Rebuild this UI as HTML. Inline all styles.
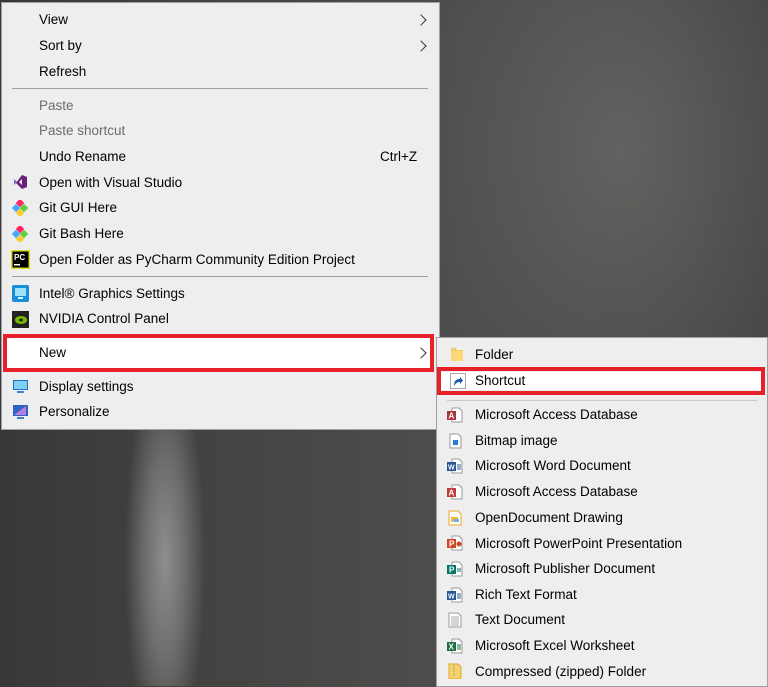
<!DOCTYPE html>
<html><head><meta charset="utf-8"><style>
*{margin:0;padding:0;box-sizing:border-box}
body{width:768px;height:686px;overflow:hidden;position:relative;font-family:"Liberation Sans",sans-serif;font-size:13.5px;color:#000;
background:
radial-gradient(ellipse 40px 200px at 165px 560px,#8e8e8c 0%,#6d6d6b 50%,transparent 100%),
radial-gradient(ellipse 200px 300px at 620px 150px,#626260,transparent),
linear-gradient(90deg,#383838 0%,#444443 30%,#4e4e4e 60%,#464645 100%);}
.m{position:absolute;background:#eeeeee;border:1px solid #a0a0a0}
.t{position:absolute;white-space:nowrap;line-height:16px}
.g{color:#6d6d6d}
.sep{position:absolute;height:1px;background:#a0a0a0}
.ic{position:absolute;width:16px;height:16px}
.red{position:absolute;border:4px solid #e8202a}
.ar{position:absolute;width:8px;height:8px;border-right:1.5px solid #333;border-top:1.5px solid #333;transform:rotate(45deg)}
</style></head><body>
<div class="m" style="left:1px;top:2px;width:439px;height:428px"></div>
<div class="t" style="left:39px;top:12px">View</div>
<div class="ar" style="left:417px;top:16px"></div>
<div class="t" style="left:39px;top:38px">Sort by</div>
<div class="ar" style="left:417px;top:42px"></div>
<div class="t" style="left:39px;top:64px">Refresh</div>
<div class="sep" style="left:12px;top:88px;width:416px"></div>
<div class="t g" style="left:39px;top:98px">Paste</div>
<div class="t g" style="left:39px;top:123px">Paste shortcut</div>
<div class="t" style="left:39px;top:149px">Undo Rename</div>
<div class="t" style="left:380px;top:149px">Ctrl+Z</div>
<svg class="ic" style="left:12px;top:174px" viewBox="0 0 16 16"><path d="M2 5l3 3-3 3z" fill="#8661c5"/><path d="M10 1l5 2v10l-5 2-6-6z" fill="#68217a"/><path d="M10 5v6l-3-3z" fill="#eee"/></svg>
<div class="t" style="left:39px;top:175px">Open with Visual Studio</div>
<svg class="ic" style="left:12px;top:200px" viewBox="0 0 16 16"><rect x="5" y="0" width="6" height="6" fill="#f26" transform="rotate(45 8 3)"/><rect x="1" y="5" width="6" height="6" fill="#4af" transform="rotate(45 4 8)"/><rect x="9" y="5" width="6" height="6" fill="#6c4" transform="rotate(45 12 8)"/><rect x="5" y="10" width="6" height="6" fill="#fc3" transform="rotate(45 8 13)"/></svg>
<div class="t" style="left:39px;top:200px">Git GUI Here</div>
<svg class="ic" style="left:12px;top:226px" viewBox="0 0 16 16"><rect x="5" y="0" width="6" height="6" fill="#f26" transform="rotate(45 8 3)"/><rect x="1" y="5" width="6" height="6" fill="#4af" transform="rotate(45 4 8)"/><rect x="9" y="5" width="6" height="6" fill="#6c4" transform="rotate(45 12 8)"/><rect x="5" y="10" width="6" height="6" fill="#fc3" transform="rotate(45 8 13)"/></svg>
<div class="t" style="left:39px;top:226px">Git Bash Here</div>
<svg class="ic" style="left:11px;top:250px;width:19px;height:19px" viewBox="0 0 19 19"><rect width="19" height="19" fill="#dd2"/><rect x="1.5" y="1.5" width="16" height="16" fill="#000"/><text x="3" y="10" fill="#fff" font-size="8" font-weight="bold" font-family="Liberation Sans">PC</text><rect x="3" y="14" width="6" height="1.5" fill="#fff"/></svg>
<div class="t" style="left:39px;top:252px">Open Folder as PyCharm Community Edition Project</div>
<div class="sep" style="left:12px;top:276px;width:416px"></div>
<svg class="ic" style="left:12px;top:285px;width:17px;height:17px" viewBox="0 0 17 17"><rect width="17" height="17" rx="2" fill="#1a8ed8"/><rect x="3" y="3" width="11" height="8" fill="#9ee3f5"/><rect x="6" y="12" width="5" height="2" fill="#dff"/></svg>
<div class="t" style="left:39px;top:286px">Intel® Graphics Settings</div>
<svg class="ic" style="left:12px;top:311px;width:17px;height:17px" viewBox="0 0 17 17"><rect width="17" height="17" fill="#222"/><ellipse cx="9" cy="9" rx="6" ry="4" fill="#76b900"/><ellipse cx="9" cy="9" rx="2" ry="1.5" fill="#222"/></svg>
<div class="t" style="left:39px;top:311px">NVIDIA Control Panel</div>
<div style="position:absolute;left:7px;top:338px;width:423px;height:30px;background:#fff"></div>
<div class="red" style="left:3px;top:334px;width:431px;height:38px"></div>
<div class="t" style="left:39px;top:345px">New</div>
<div class="ar" style="left:417px;top:349px"></div>
<svg class="ic" style="left:12px;top:378px;width:17px;height:17px" viewBox="0 0 17 17"><rect x="1" y="2" width="15" height="10" fill="#1c6fc2"/><rect x="2" y="3" width="13" height="8" fill="#7fd0f5"/><rect x="5" y="13" width="7" height="2" fill="#3a84c9"/></svg>
<div class="t" style="left:39px;top:379px">Display settings</div>
<svg class="ic" style="left:12px;top:403px;width:17px;height:17px" viewBox="0 0 17 17"><rect x="1" y="2" width="15" height="11" fill="#3061c5"/><path d="M2 12l12-9v9z" fill="#b57ee0"/><rect x="5" y="14" width="7" height="2" fill="#3a84c9"/></svg>
<div class="t" style="left:39px;top:404px">Personalize</div>

<div class="m" style="left:436px;top:337px;width:332px;height:350px"></div>
<svg class="ic" style="left:449px;top:346px" viewBox="0 0 16 16"><path d="M2 2h5l1 2h6v11H2z" fill="#f5c96a"/><path d="M2 5h12v10H2z" fill="#fcd879"/></svg>
<div class="t" style="left:475px;top:347px">Folder</div>
<div style="position:absolute;left:441px;top:372px;width:320px;height:18px;background:#fff"></div>
<div class="red" style="left:437px;top:367px;width:328px;height:28px"></div>
<svg class="ic" style="left:450px;top:373px" viewBox="0 0 16 16"><rect x="0.5" y="0.5" width="15" height="15" fill="#fff" stroke="#aaa"/><path d="M4 13c0-5 2-7 6-7V4l3 3.5-3 3.5V9c-3 0-4 1-6 4z" fill="#1e5eab"/></svg>
<div class="t" style="left:475px;top:373px">Shortcut</div>
<div class="sep" style="left:447px;top:400px;width:310px;background:#c8c8c8"></div>
<svg class="ic" style="left:447px;top:407px" viewBox="0 0 16 16"><path d="M5 1h7l3 3v11H5z" fill="#fff" stroke="#999"/><rect x="0" y="4" width="9" height="9" fill="#a4373a"/><text x="1.5" y="11.5" fill="#fff" font-size="8" font-weight="bold" font-family="Liberation Sans">A</text></svg>
<div class="t" style="left:475px;top:407px">Microsoft Access Database</div>
<svg class="ic" style="left:447px;top:433px" viewBox="0 0 16 16"><path d="M3 1h8l3 3v11H3z" fill="#fff" stroke="#999"/><rect x="6" y="7" width="5" height="5" fill="#2a7fd4"/></svg>
<div class="t" style="left:475px;top:433px">Bitmap image</div>
<svg class="ic" style="left:447px;top:458px" viewBox="0 0 16 16"><path d="M5 1h7l3 3v11H5z" fill="#fff" stroke="#999"/><rect x="0" y="4" width="9" height="9" fill="#2b5797"/><text x="1" y="11.5" fill="#fff" font-size="7" font-weight="bold" font-family="Liberation Sans">W</text><path d="M10 7h4M10 9h4M10 11h4" stroke="#2b5797"/></svg>
<div class="t" style="left:475px;top:458px">Microsoft Word Document</div>
<svg class="ic" style="left:447px;top:484px" viewBox="0 0 16 16"><path d="M5 1h7l3 3v11H5z" fill="#fff" stroke="#999"/><rect x="0" y="4" width="9" height="9" fill="#c23b3f"/><text x="1.5" y="11.5" fill="#fff" font-size="8" font-weight="bold" font-family="Liberation Sans">A</text></svg>
<div class="t" style="left:475px;top:484px">Microsoft Access Database</div>
<svg class="ic" style="left:447px;top:510px" viewBox="0 0 16 16"><path d="M2 1h9l3 3v11H2z" fill="#fff" stroke="#e8a820"/><rect x="4" y="7" width="7" height="5" fill="#f3b442"/><rect x="7" y="9" width="5" height="3" fill="#6cb0e6"/></svg>
<div class="t" style="left:475px;top:510px">OpenDocument Drawing</div>
<svg class="ic" style="left:447px;top:535px" viewBox="0 0 16 16"><path d="M5 1h7l3 3v11H5z" fill="#fff" stroke="#999"/><rect x="0" y="4" width="9" height="9" fill="#d24726"/><text x="2" y="11.5" fill="#fff" font-size="8" font-weight="bold" font-family="Liberation Sans">P</text><circle cx="12" cy="9" r="2.5" fill="#d24726"/></svg>
<div class="t" style="left:475px;top:536px">Microsoft PowerPoint Presentation</div>
<svg class="ic" style="left:447px;top:561px" viewBox="0 0 16 16"><path d="M5 1h7l3 3v11H5z" fill="#fff" stroke="#999"/><rect x="0" y="4" width="9" height="9" fill="#077568"/><text x="2" y="11.5" fill="#fff" font-size="8" font-weight="bold" font-family="Liberation Sans">P</text><path d="M10 8h4M10 10h4" stroke="#077568"/></svg>
<div class="t" style="left:475px;top:561px">Microsoft Publisher Document</div>
<svg class="ic" style="left:447px;top:587px" viewBox="0 0 16 16"><path d="M5 1h7l3 3v11H5z" fill="#fff" stroke="#999"/><rect x="0" y="4" width="9" height="9" fill="#2b5797"/><text x="1" y="11.5" fill="#fff" font-size="7" font-weight="bold" font-family="Liberation Sans">W</text><path d="M10 7h4M10 9h4M10 11h4" stroke="#2b5797"/></svg>
<div class="t" style="left:475px;top:587px">Rich Text Format</div>
<svg class="ic" style="left:447px;top:612px" viewBox="0 0 16 16"><path d="M2 1h9l3 3v11H2z" fill="#fff" stroke="#999"/><path d="M4 5h8M4 7h8M4 9h8M4 11h8M4 13h8" stroke="#aaa"/></svg>
<div class="t" style="left:475px;top:612px">Text Document</div>
<svg class="ic" style="left:447px;top:638px" viewBox="0 0 16 16"><path d="M5 1h7l3 3v11H5z" fill="#fff" stroke="#999"/><rect x="0" y="4" width="9" height="9" fill="#1d7044"/><text x="1.5" y="11.5" fill="#fff" font-size="8" font-weight="bold" font-family="Liberation Sans">X</text><path d="M10 7h4M10 9h4M10 11h4" stroke="#1d7044"/></svg>
<div class="t" style="left:475px;top:638px">Microsoft Excel Worksheet</div>
<svg class="ic" style="left:447px;top:663px" viewBox="0 0 16 16"><path d="M2 1h9l3 3v12H2z" fill="#f7d36b" stroke="#d8a930"/><path d="M7 2v12" stroke="#888" stroke-dasharray="1 1"/></svg>
<div class="t" style="left:475px;top:664px">Compressed (zipped) Folder</div>
</body></html>
